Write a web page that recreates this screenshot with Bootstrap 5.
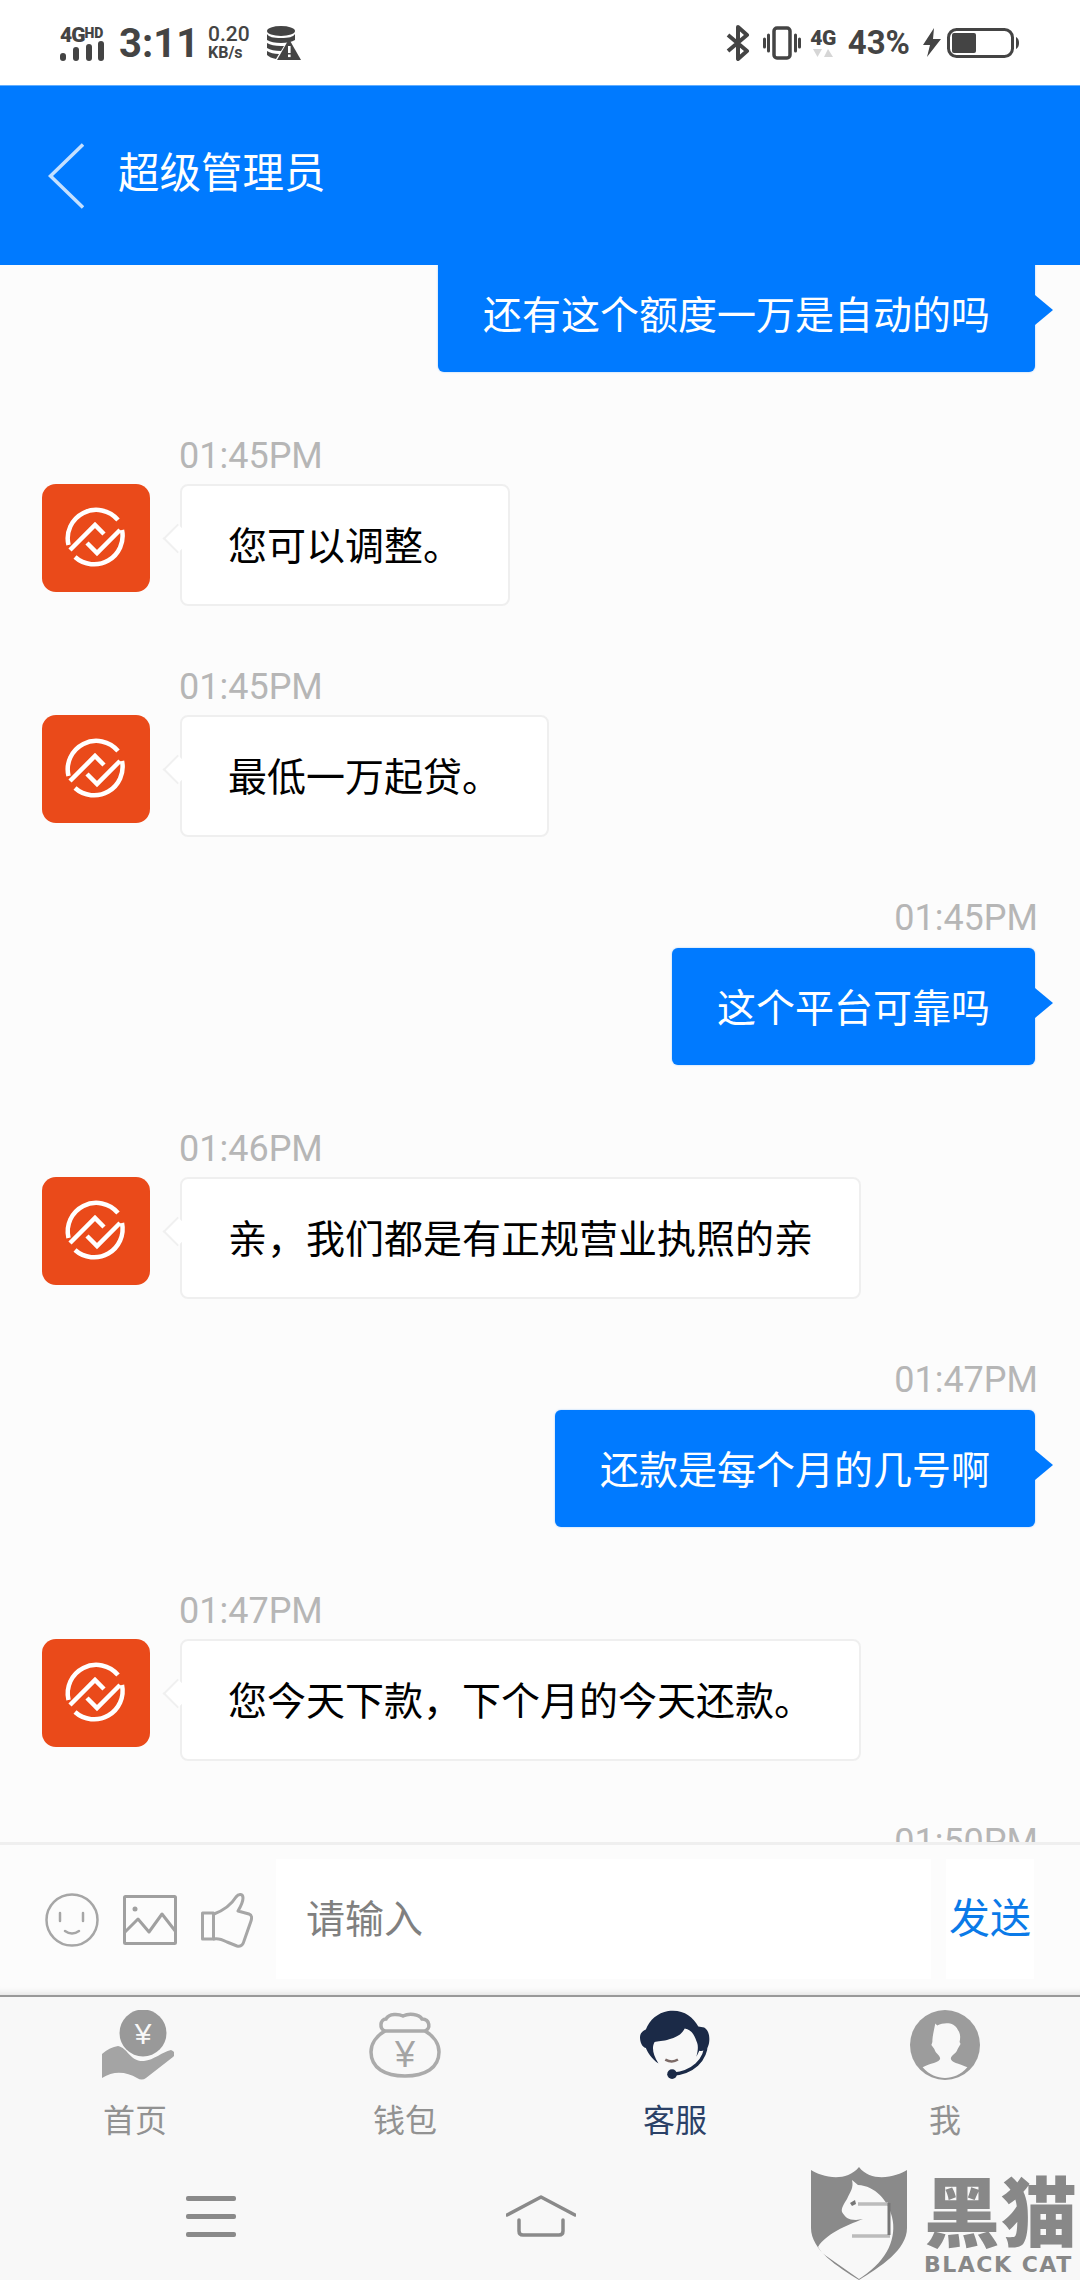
<!DOCTYPE html>
<html lang="zh-CN">
<head>
  <meta charset="UTF-8" />
  <meta name="viewport" content="width=device-width, initial-scale=1.0" />
  <title>超级管理员</title>
  <link href="https://cdn.jsdelivr.net/npm/bootstrap@5.3.3/dist/css/bootstrap.min.css" rel="stylesheet" />
  <style>
    html, body { height: 2280px; }
    body {
      width: 1080px;
      background: #fcfcfc;
      font-family: "Noto Sans CJK SC", "Noto Sans", sans-serif;
      overflow: hidden;
    }
    svg { display: block; flex: none; }

    .statusbar {
      height: 85px;
      flex: none;
      background: #fff;
      color: #444;
      font-family: Roboto, sans-serif;
      padding: 0 60px;
    }
    .net-type { width: 44px; height: 36px; }
    .net-label { font-size: 21px; line-height: 16px; font-weight: 900; letter-spacing: -1px; white-space: nowrap; height: 16px; }
    .net-label span { font-size: 14px; vertical-align: 4px; letter-spacing: 0; }
    .clock { font-size: 40px; font-weight: 700; line-height: 41px; margin: 2px 0 0 15px; width: 72px; }
    .speed { margin-left: 17px; width: 45px; font-weight: 500; text-align: left; }
    .speed div:first-child { font-size: 21px; line-height: 20px; }
    .speed div:last-child { font-size: 16px; line-height: 17px; font-weight: 700; }
    .db-icon { margin-left: 14px; }
    .net-small { font-size: 21px; font-weight: 900; line-height: 20px; letter-spacing: -.5px; }
    .batt-text { font-size: 33px; font-weight: 700; line-height: 32px; white-space: nowrap; margin-left: 12px; }
    .vib-icon { margin-left: 13px; }
    .net-side { margin-left: 9px; }
    .bolt-icon { margin-left: 13px; }
    .batt-icon { margin-left: 6px; }

    .titlebar {
      height: 180px;
      flex: none;
      background: #007aff;
      border-top: 1px solid #62aeff;
      color: #fff;
      padding-left: 48px;
    }
    .titlebar h1 { font-size: 41.500px; font-weight: 400; margin: 0 0 10px 34px; line-height: 1; }

    .chat-area { flex: 1 1 0; min-height: 0; overflow: hidden; }
    .chat-inner { margin-top: -10px; padding: 0 45px 0 42px; }
    .msg-time { font-family: Roboto, sans-serif; font-size: 36px; line-height: 44px; color: #b6b6b6; }
    .msg-left { margin-bottom: 59px; }
    .msg-left .msg-time { padding-left: 137px; margin-bottom: 6px; }
    .msg-right { margin-bottom: 62px; }
    .msg-right .msg-time { text-align: right; margin-right: -3px; margin-bottom: 8px; }
    .avatar-box { width: 108px; height: 108px; background: #ea4a1a; border-radius: 14px; flex: none; margin-right: 30px; }
    .bubble {
      position: relative;
      font-size: 39px;
      line-height: 57px;
      white-space: nowrap;
      border-radius: 6px;
    }
    .bubble-in {
      background: #fff;
      border: 2px solid #efefef;
      border-radius: 8px;
      padding: 29px 46px 32px;
      color: #000;
    }
    .bubble-in::before {
      content: "";
      position: absolute;
      left: -15px;
      top: 42px;
      width: 21px;
      height: 21px;
      background: #fff;
      border-left: 2px solid #f0f0f0;
      border-bottom: 2px solid #f0f0f0;
      transform: rotate(45deg);
    }
    .bubble-out {
      background: #007aff;
      color: #fff;
      padding: 29px 45px 31px;
      box-shadow: 0 0 2px rgba(0, 122, 255, .4);
    }
    .bubble-out::after {
      content: "";
      position: absolute;
      right: -18px;
      top: 40px;
      border-left: 18px solid #007aff;
      border-top: 15px solid transparent;
      border-bottom: 15px solid transparent;
    }

    .inputbar {
      height: 155px;
      flex: none;
      background: #fcfcfc;
      border-top: 3px solid #efefef;
      border-bottom: 2px solid #999;
      padding-left: 45px;
      box-shadow: inset 0 -8px 6px -6px #e2e2e2;
    }
    .tool-icons { gap: 24px; width: 231px; }
    .input-box {
      width: 655px;
      height: 120px;
      margin-bottom: 3px;
      background: #fff;
      color: #808080;
      font-size: 39px;
      padding: 0 0 5px 30px;
    }
    .send-box {
      width: 88px;
      height: 120px;
      margin: 0 0 3px 15px;
      padding-bottom: 5px;
      background: #fff;
      color: #0a7ae8;
      font-size: 41px;
    }

    .tabbar { height: 168px; flex: none; background: #f8f8f8; padding-top: 13px; }
    .tab-item { width: 270px; font-size: 32px; line-height: 40px; color: #929292; }
    .tab-item svg { margin-bottom: 18px; }
    .tab-item .hand-icon { margin-left: 6px; }
    .tab-on { color: #2b4167; }
    .navbar-keys { height: 115px; flex: none; background: #f8f8f8; position: relative; }
    .keys-row { width: 1080px; height: 115px; padding-bottom: 13px; }
    .menu-key { width: 50px; margin-left: 186px; gap: 13px; margin-top: 1px; }
    .menu-key i { display: block; height: 5px; background: #8a8a8a; border-radius: 2px; }
    .home-key { margin-left: 270px; }

    .wm-mark { position: absolute; right: 3px; top: 0; gap: 16px; color: #888; }
    .wm-words { width: 153px; }
    .wm-cn { font-size: 76px; font-weight: 900; line-height: 72px; letter-spacing: 1px; white-space: nowrap; margin-top: 7px; }
    .wm-en { font-family: "DejaVu Sans", sans-serif; font-size: 22px; font-weight: 700; line-height: 26px; letter-spacing: 1.500px; white-space: nowrap; margin-top: 8px; }
  </style>
</head>
<body class="d-flex flex-column">

  <div class="statusbar d-flex align-items-center">
    <div class="net-type d-flex flex-column justify-content-between">
      <div class="net-label">4G<span>HD</span></div>
      <svg width="44" height="20" viewBox="0 0 44 20" fill="#444">
        <rect x="0" y="12" width="6" height="8" rx="3"/><rect x="13" y="6" width="6" height="14" rx="3"/>
        <rect x="26" y="3" width="6" height="17" rx="3"/><rect x="38" y="0" width="6" height="20" rx="3"/>
      </svg>
    </div>
    <div class="clock">3:11</div>
    <div class="speed"><div>0.20</div><div>KB/s</div></div>
    <svg class="db-icon" width="34" height="34" viewBox="0 0 34 34">
      <ellipse cx="14" cy="5" rx="14" ry="5" fill="#444"/>
      <path d="M0 8c2 3 6 4 14 4s12-1 14-4v6c-3 2-8 3-14 3S3 16 0 14zM0 17c3 2 8 3 14 3h3l-3 5C8 25 3 24 0 22zM0 25c3 2 7 3 12 3l-3 5c-4-1-7-2-9-4z" fill="#444"/>
      <path d="M22 13l12 21H10z" fill="#444"/>
      <rect x="21" y="20" width="2.6" height="7" fill="#fff"/><rect x="21" y="28.500" width="2.6" height="2.6" fill="#fff"/>
    </svg>

    <div class="d-flex align-items-center ms-auto">
      <svg width="24" height="36" viewBox="0 0 22 36" fill="none" stroke="#444" stroke-width="4" stroke-linejoin="round">
        <path d="M1 10l19 16-9 8V2l9 8L1 26"/>
      </svg>
      <svg class="vib-icon" width="38" height="34" viewBox="0 0 38 34" fill="none" stroke="#444" stroke-linecap="round">
        <rect x="11" y="2" width="16" height="30" rx="3" stroke-width="3.500"/>
        <path d="M5.500 9v16M32.500 9v16" stroke-width="3"/><path d="M1.500 13v8M36.500 13v8" stroke-width="3"/>
      </svg>
      <div class="net-side d-flex flex-column align-items-center">
        <div class="net-small">4G</div>
        <svg width="20" height="10" viewBox="0 0 20 10" fill="#d6d6d6"><path d="M0 1h9L4.500 9zM15 1l5 8h-9z"/></svg>
      </div>
      <div class="batt-text">43%</div>
      <svg class="bolt-icon" width="18" height="29" viewBox="0 0 18 29" fill="#444"><path d="M11 0L0 17h7L4 29l14-18h-8z"/></svg>
      <svg class="batt-icon" width="73" height="30" viewBox="0 0 73 30">
        <rect x="1.500" y="1.500" width="64" height="27" rx="8" fill="none" stroke="#444" stroke-width="3"/>
        <rect x="5" y="5" width="24" height="20" rx="2" fill="#444"/>
        <path d="M69 9c2 1 3 3 3 6s-1 5-3 6z" fill="#444"/>
      </svg>
    </div>
  </div>

  <div class="titlebar d-flex align-items-center">
    <svg width="36" height="66" viewBox="0 0 36 66" fill="none" stroke="#c4e0ff" stroke-width="3.500"><path d="M35 1.500L2.500 33 35 64.500"/></svg>
    <h1>超级管理员</h1>
  </div>

  <div class="chat-area">
    <div class="chat-inner">
      <div class="msg-right d-flex flex-column align-items-end">
        <div class="bubble bubble-out">还有这个额度一万是自动的吗</div>
      </div>

      <div class="msg-left">
        <div class="msg-time">01:45PM</div>
        <div class="d-flex align-items-start">
          <div class="avatar-box"><svg width="108" height="108" viewBox="0 0 108 108" fill="none" stroke="#fff" stroke-width="4.500"><path d="M26.500 61A28.500 28.500 0 0 1 76 36M80 46A28.500 28.500 0 0 1 33 73"/><path d="M28 66L53 41 62 50M45 59l10 10 23-23"/></svg></div>
          <div class="bubble bubble-in">您可以调整。</div>
        </div>
      </div>

      <div class="msg-left">
        <div class="msg-time">01:45PM</div>
        <div class="d-flex align-items-start">
          <div class="avatar-box"><svg width="108" height="108" viewBox="0 0 108 108" fill="none" stroke="#fff" stroke-width="4.500"><path d="M26.500 61A28.500 28.500 0 0 1 76 36M80 46A28.500 28.500 0 0 1 33 73"/><path d="M28 66L53 41 62 50M45 59l10 10 23-23"/></svg></div>
          <div class="bubble bubble-in">最低一万起贷。</div>
        </div>
      </div>

      <div class="msg-right d-flex flex-column align-items-end">
        <div class="msg-time">01:45PM</div>
        <div class="bubble bubble-out">这个平台可靠吗</div>
      </div>

      <div class="msg-left">
        <div class="msg-time">01:46PM</div>
        <div class="d-flex align-items-start">
          <div class="avatar-box"><svg width="108" height="108" viewBox="0 0 108 108" fill="none" stroke="#fff" stroke-width="4.500"><path d="M26.500 61A28.500 28.500 0 0 1 76 36M80 46A28.500 28.500 0 0 1 33 73"/><path d="M28 66L53 41 62 50M45 59l10 10 23-23"/></svg></div>
          <div class="bubble bubble-in">亲，我们都是有正规营业执照的亲</div>
        </div>
      </div>

      <div class="msg-right d-flex flex-column align-items-end">
        <div class="msg-time">01:47PM</div>
        <div class="bubble bubble-out">还款是每个月的几号啊</div>
      </div>

      <div class="msg-left">
        <div class="msg-time">01:47PM</div>
        <div class="d-flex align-items-start">
          <div class="avatar-box"><svg width="108" height="108" viewBox="0 0 108 108" fill="none" stroke="#fff" stroke-width="4.500"><path d="M26.500 61A28.500 28.500 0 0 1 76 36M80 46A28.500 28.500 0 0 1 33 73"/><path d="M28 66L53 41 62 50M45 59l10 10 23-23"/></svg></div>
          <div class="bubble bubble-in">您今天下款，下个月的今天还款。</div>
        </div>
      </div>

      <div class="msg-right d-flex flex-column align-items-end">
        <div class="msg-time">01:50PM</div>
      </div>
    </div>
  </div>

  <div class="inputbar d-flex align-items-center">
    <div class="tool-icons d-flex align-items-center">
      <svg width="54" height="54" viewBox="0 0 54 54" fill="none" stroke="#a6a6a6" stroke-width="2.500" stroke-linecap="round">
        <circle cx="27" cy="27" r="25.500"/><path d="M15 20v8M38 20v8"/><path d="M20 38q7 5 14 0"/>
      </svg>
      <svg width="54" height="50" viewBox="0 0 54 50" fill="none" stroke="#a0a0a0" stroke-width="3" stroke-linejoin="round">
        <rect x="1.500" y="1.500" width="51" height="47" rx="1"/><path d="M2 37l13-13 11 13 13-18 14 18"/><circle cx="12" cy="14" r="2.500" fill="#a0a0a0" stroke="none"/>
      </svg>
      <svg width="52" height="56" viewBox="0 0 52 56" fill="none" stroke="#a6a6a6" stroke-width="3" stroke-linejoin="round" stroke-linecap="round">
        <rect x="1.500" y="21" width="11" height="26"/><path d="M13 22c8-3 17-9 22-17 3-4 7-3 7 1 0 4-2 8-5 13l11 3c3 1 3 4 2 7l-7 20c-1 4-3 6-7 5l-10-4c-4-2-8-4-13-3"/>
      </svg>
    </div>
    <div class="input-box d-flex align-items-center">请输入</div>
    <div class="send-box d-flex align-items-center justify-content-center">发送</div>
  </div>

  <div class="tabbar d-flex">
    <div class="tab-item d-flex flex-column align-items-center">
      <svg class="hand-icon" width="72" height="70" viewBox="0 0 72 70">
        <circle cx="41" cy="23" r="23.500" fill="#999"/>
        <text x="41" y="34" font-family="Liberation Sans, sans-serif" font-size="30" fill="#f8f8f8" text-anchor="middle">¥</text>
        <path d="M0 44Q8 37 16 36C26 38 28 52 42 51 52 50 60 42 69 40 74 42 73 45 71 47L44 68Q40 71 35 68C25 62 12 60 0 68Z" fill="#a4a4a4"/>
      </svg>
      <div>首页</div>
    </div>
    <div class="tab-item d-flex flex-column align-items-center">
      <svg width="72" height="70" viewBox="0 0 72 70" fill="none" stroke="#ababab" stroke-width="3.500">
        <path d="M16 21C10 19 11 9 17 9 20 3 30 4 34 6 40 3 50 4 53 9 61 9 62 19 56 21Z"/>
        <path d="M16 21C7 26 2 34 2 42 2 58 16 66 36 66S70 58 70 42C70 34 65 26 56 21"/>
        <text x="36" y="57" font-family="Liberation Sans, sans-serif" font-size="36" fill="#a4a4a4" stroke="none" text-anchor="middle">¥</text>
      </svg>
      <div>钱包</div>
    </div>
    <div class="tab-item tab-on d-flex flex-column align-items-center">
      <svg width="72" height="70" viewBox="0 0 72 72">
        <path d="M29 1C44-1 54 6 60 17L66 18C71 21 72 28 71 34 70 40 66 43 61 42L58 48C60 40 60 36 58 32 56 26 53 20 46 19 43 25 38 28 30 30 24 32 18 32 15 33 12 38 13 46 19 55 12 50 8 44 6 39 2 38 0 33 0 28 0 24 3 21 6 20 10 10 18 3 29 1Z" fill="#1b2a47"/>
        <path d="M68 34C68 52 54 64 34 66" fill="none" stroke="#1b2a47" stroke-width="3.500"/>
        <circle cx="33" cy="66" r="5" fill="#1b2a47"/>
        <path d="M26 51q7 4 13 0" fill="none" stroke="#7c6a66" stroke-width="2.500"/>
      </svg>
      <div>客服</div>
    </div>
    <div class="tab-item d-flex flex-column align-items-center">
      <svg width="72" height="70" viewBox="0 0 72 72">
        <circle cx="36" cy="36" r="36" fill="#9c9c9c"/>
        <path d="M26 14L28 16C36 12 46 13 49 20 52 24 52 28 51 33L52 35 49 40C47 46 42 46 42 50 42 54 50 55 59 59 52 67 44 70 36 70 28 70 20 67 13 59 20 55 31 54 31 50 31 46 27 46 25 40L22 36 23 33C23 26 25 20 26 14Z" fill="#f8f8f8"/>
      </svg>
      <div>我</div>
    </div>
  </div>

  <div class="navbar-keys">
    <div class="keys-row d-flex align-items-center">
      <div class="menu-key d-flex flex-column"><i></i><i></i><i></i></div>
      <svg class="home-key" width="70" height="42" viewBox="0 0 70 42" fill="none" stroke="#8a8a8a" stroke-width="3.500" stroke-linejoin="round" stroke-linecap="round">
        <path d="M1 20L35 2l34 18"/><path d="M13 25v11q0 4 4 4h36q4 0 4-4V25"/>
      </svg>
    </div>
    <div class="wm-mark d-flex">
      <svg width="100" height="115" viewBox="8 3 100 115">
        <path d="M11 8C20 14 45 22 59 5 72 22 98 14 107 8V66C107 88 80 105 59 118 38 105 11 88 11 66Z" fill="#8a8a8a"/>
        <path d="M52 18L58 23C75 24 88 38 92 55 97 75 88 98 62 115L59 117 22 91 18 85C26 72 45 64 63 57L56 58C48 58 45 55 42 50 41 46 44 42 47 37 50 30 54 26 52 18Z" fill="#f8f8f8"/>
        <path d="M58 42H88M52 74H90" stroke="#bcbcbc" stroke-width="3.500"/>
        <path d="M89 41V73" stroke="#777" stroke-width="3"/>
        <path d="M50 41l5-3 1 4-4 2z" fill="#777"/>
      </svg>
      <div class="wm-words">
        <div class="wm-cn">黑猫</div>
        <div class="wm-en">BLACK CAT</div>
      </div>
    </div>
  </div>

  <script src="https://cdn.jsdelivr.net/npm/bootstrap@5.3.3/dist/js/bootstrap.bundle.min.js"></script>
</body>
</html>
